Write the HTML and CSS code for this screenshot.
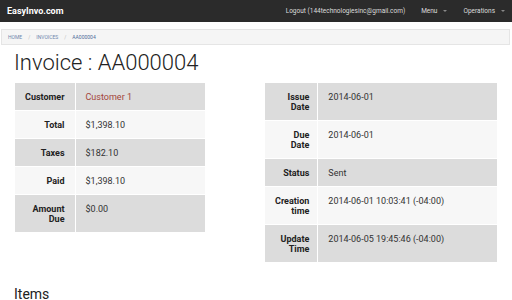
FILE: index.html
```html
<!DOCTYPE html>
<html>
	<head>
		<meta charset="UTF-8">
		<title>EasyInvo.com</title>
		<link rel="stylesheet" href="styles.css">
	</head>
	<body>
		<div class="navbar">
			<a class="brand" href="">EasyInvo.com</a>
			<ul class="nav">
				<li><a href="">Logout (144technologiesinc@gmail.com)</a></li>
				<li><a href="">Menu <span class="caret"></span></a></li>
				<li><a href="">Operations <span class="caret"></span></a></li>
			</ul>
		</div>
		<ul class="breadcrumb">
			<li><a href="">Home</a></li>
			<li><a href="">Invoices</a></li>
			<li class="active">AA000004</li>
		</ul>
		<div class="container">
			<h1 class="title">Invoice : AA000004</h1>
			<div class="columns">
				<table class="info info-left">
					<tr><th>Customer</th><td><a href="">Customer 1</a></td></tr>
					<tr><th>Total</th><td>$1,398.10</td></tr>
					<tr><th>Taxes</th><td>$182.10</td></tr>
					<tr><th>Paid</th><td>$1,398.10</td></tr>
					<tr><th>Amount<br>Due</th><td>$0.00</td></tr>
				</table>
				<table class="info info-right">
					<tr><th>Issue<br>Date</th><td>2014-06-01</td></tr>
					<tr><th>Due<br>Date</th><td>2014-06-01</td></tr>
					<tr><th>Status</th><td>Sent</td></tr>
					<tr><th>Creation<br>time</th><td>2014-06-01 10:03:41 (-04:00)</td></tr>
					<tr><th>Update<br>Time</th><td>2014-06-05 19:45:46 (-04:00)</td></tr>
				</table>
			</div>
			<h2 class="section">Items</h2>
		</div>
	</body>
</html>
```
FILE: styles.css
```css
* {
	margin: 0;
	padding: 0;
}
body {
	font-family: Roboto, "Liberation Sans", sans-serif;
	color: #333;
	background: #fff;
	overflow: hidden;
}
a {
	text-decoration: none;
}
.navbar {
	height: 22px;
	background-color: #2b2b2b;
	display: flex;
	align-items: center;
	padding: 0 7px;
}
.brand {
	color: #fff;
	font-size: 9px;
	font-weight: bold;
}
.nav {
	list-style: none;
	display: flex;
	margin-left: auto;
	gap: 16px;
	margin-right: 0;
}
.nav a {
	color: #ddd;
	font-size: 6.5px;
	display: flex;
	align-items: center;
}
.caret {
	display: inline-block;
	width: 0;
	height: 0;
	margin-left: 6px;
	border-top: 2.5px solid #888;
	border-left: 2.5px solid transparent;
	border-right: 2.5px solid transparent;
}
.breadcrumb {
	list-style: none;
	display: flex;
	margin: 7px 2px 0 1px;
	height: 16px;
	align-items: center;
	padding: 0 6px;
	background-color: #f5f5f5;
	border: 1px solid #e5e5e5;
	box-sizing: border-box;
	font-size: 5px;
	text-transform: uppercase;
}
.breadcrumb li a {
	color: #6f87ad;
}
.breadcrumb li + li::before {
	content: "/";
	color: #bbb;
	padding: 0 6px;
}
.breadcrumb .active {
	color: #4f6c9a;
}
.container {
	padding: 0 14px;
}
.title {
	font-size: 22px;
	font-weight: 300;
	color: #222;
	line-height: 28px;
	margin-top: 4px;
	margin-bottom: 5px;
}
.columns {
	display: grid;
	grid-template-columns: 192px 234px;
	justify-content: space-between;
	align-items: start;
}
.info {
	border-collapse: collapse;
	font-size: 9px;
	line-height: 10px;
}
.info-left {
	width: 192px;
}
.info-right {
	width: 234px;
}
.info th,
.info td {
	padding: 9px 10px 8px;
	vertical-align: top;
	border: 1px solid #fff;
}
.info-right th {
	padding-right: 8px;
}
.info th {
	text-align: right;
	font-weight: bold;
	color: #222;
	white-space: nowrap;
	width: 1%;
}
.info td {
	text-align: left;
	font-weight: normal;
}
.info tr:nth-child(odd) {
	background-color: #dcdcdc;
}
.info tr:nth-child(even) {
	background-color: #f7f7f7;
}
.info td a {
	color: #a3453a;
}
.section {
	font-size: 14px;
	font-weight: 400;
	color: #222;
	line-height: 18px;
	margin-top: 22px;
}
```
